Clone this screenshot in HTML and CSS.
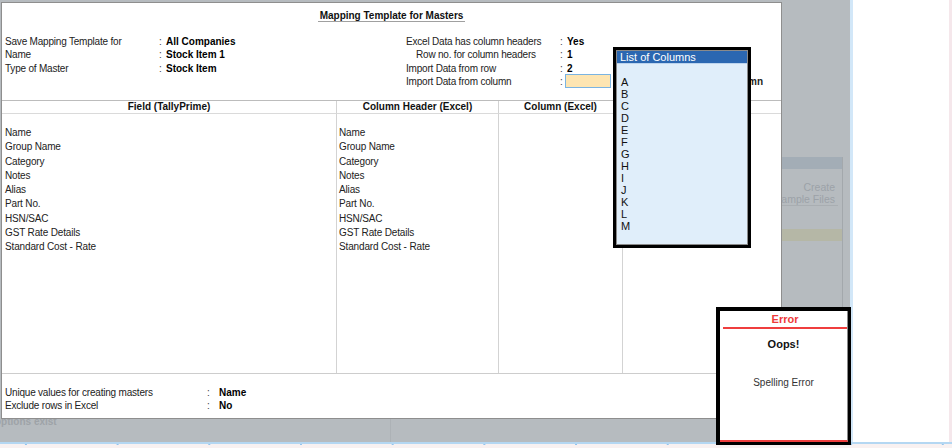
FILE: index.html
```html
<!DOCTYPE html>
<html lang="en">
<head>
<meta charset="utf-8">
<title>Mapping Template for Masters</title>
<link rel="stylesheet" href="styles.css">
</head>
<body>
<div class="screen">
  <div class="main-row">
    <div class="workspace">
      <div class="bg-window">
        <div class="bg-head"></div>
        <div class="bg-body">
          <div class="bg-link">Create<br>Sample Files</div>
          <div class="bg-band"></div>
        </div>
      </div>

      <div class="dialog">
        <div class="title-row"><span class="title">Mapping Template for Masters</span></div>

        <div class="fields">
          <div class="group group-left">
            <div class="frow"><span class="lbl">Save Mapping Template for</span><span class="colon">:</span><span class="val">All Companies</span></div>
            <div class="frow"><span class="lbl">Name</span><span class="colon">:</span><span class="val">Stock Item 1</span></div>
            <div class="frow"><span class="lbl">Type of Master</span><span class="colon">:</span><span class="val">Stock Item</span></div>
          </div>
          <div class="group group-right">
            <div class="frow"><span class="lbl">Excel Data has column headers</span><span class="colon">:</span><span class="val">Yes</span></div>
            <div class="frow"><span class="lbl indent">Row no. for column headers</span><span class="colon">:</span><span class="val">1</span></div>
            <div class="frow"><span class="lbl">Import Data from row</span><span class="colon">:</span><span class="val">2</span></div>
            <div class="frow"><span class="lbl">Import Data from column</span><span class="colon">:</span><span class="input"></span></div>
          </div>
          <div class="side-note">Column</div>
        </div>

        <div class="table">
          <div class="th">Field (TallyPrime)</div>
          <div class="th">Column Header (Excel)</div>
          <div class="th">Column (Excel)</div>
          <div class="th"></div>
          <div class="td td-first">
            <div>Name</div>
            <div>Group Name</div>
            <div>Category</div>
            <div>Notes</div>
            <div>Alias</div>
            <div>Part No.</div>
            <div>HSN/SAC</div>
            <div>GST Rate Details</div>
            <div>Standard Cost - Rate</div>
          </div>
          <div class="td td-second">
            <div>Name</div>
            <div>Group Name</div>
            <div>Category</div>
            <div>Notes</div>
            <div>Alias</div>
            <div>Part No.</div>
            <div>HSN/SAC</div>
            <div>GST Rate Details</div>
            <div>Standard Cost - Rate</div>
          </div>
          <div class="td"></div>
          <div class="td"></div>
        </div>

        <div class="footer">
          <div class="frow"><span class="lbl">Unique values for creating masters</span><span class="colon">:</span><span class="val">Name</span></div>
          <div class="frow"><span class="lbl">Exclude rows in Excel</span><span class="colon">:</span><span class="val">No</span></div>
        </div>
      </div>

      <div class="status">
        <span class="status-text">options exist</span>
        <span class="status-sep"></span>
      </div>
    </div>
    <div class="sidepane"></div>
  </div>
  <div class="taskbar"></div>

  <div class="list-popup">
    <div class="list-inner">
      <div class="list-head">List of Columns</div>
      <div class="list-items">
        <div>A</div><div>B</div><div>C</div><div>D</div><div>E</div><div>F</div><div>G</div>
        <div>H</div><div>I</div><div>J</div><div>K</div><div>L</div><div>M</div>
      </div>
    </div>
  </div>

  <div class="error-popup">
    <div class="error-inner">
      <div class="error-title">Error</div>
      <div class="error-head">Oops!</div>
      <div class="error-msg">Spelling Error</div>
    </div>
  </div>
</div>
</body>
</html>
```

FILE: styles.css
```css
* { box-sizing: border-box; margin: 0; padding: 0; }

html, body { width: 952px; height: 448px; overflow: hidden; }

body {
  font-family: "Liberation Sans", Arial, sans-serif;
  font-size: 10px;
  color: #1a1a1a;
  background: #fff;
}

.screen {
  position: relative;
  width: 952px;
  height: 448px;
  display: flex;
  flex-direction: column;
  overflow: hidden;
}

.main-row { display: flex; height: 442px; }

.workspace {
  position: relative;
  width: 850px;
  flex: none;
  background: #b6bbbf;
  display: flex;
  flex-direction: column;
}

.sidepane {
  flex: 1;
  background: #fff;
  border-left: 3px solid #d2e7f8;
  border-right: 3px solid #f5e7eb;
}

.taskbar {
  height: 6px;
  border-top: 2px solid #b4d7f2;
  background-color: #f8f1f1;
  background-image: linear-gradient(to right, transparent 25px, #94c4ec 25px, #94c4ec 27px, transparent 27px);
  background-size: 91.7px 1px;
  background-repeat: repeat-x;
}

/* faded window behind the dialog */
.bg-window {
  position: absolute;
  left: 700px;
  top: 157px;
  width: 143px;
  height: 262px;
  border-right: 1px solid #a3a8ac;
  z-index: 1;
}
.bg-head { height: 12px; background: #a3adb6; }
.bg-body { padding-top: 12px; }
.bg-link {
  text-align: right;
  padding-right: 3px;
  margin-right: 4px;
  font-size: 10.5px;
  line-height: 12px;
  color: #9ca2a8;
  border-bottom: 1px solid #a9aeb2;
}
.bg-band { margin-top: 23px; height: 12px; background: #b5b7a6; }

/* main dialog */
.dialog {
  position: relative;
  z-index: 2;
  margin: 2px 0 0 1px;
  width: 781px;
  height: 417px;
  flex: none;
  background: #fff;
  border: 1px solid #8e8e8e;
  display: flex;
  flex-direction: column;
}

.title-row { display: flex; justify-content: center; padding-top: 7px; }
.title {
  font-weight: bold;
  line-height: 11px;
  padding: 0 2px;
  color: #111;
  border-bottom: 1px solid #a0a0a0;
}

.fields {
  display: flex;
  margin-top: 13px;
  padding: 0 18px 0 3px;
}
.group-left { width: 401px; flex: none; }
.group-right { flex: 1; }

.frow {
  display: flex;
  align-items: center;
  height: 13.25px;
  line-height: 13.25px;
  white-space: nowrap;
}
.lbl { width: 154px; flex: none; letter-spacing: -0.2px; color: #222; }
.indent { padding-left: 10px; }
.colon { width: 5px; flex: none; color: #444; }
.val { padding-left: 2px; font-weight: bold; color: #000; }
.input {
  width: 46px;
  height: 14px;
  background: #fde5b2;
  border: 1px solid #7ab4e2;
}
.side-note {
  align-self: flex-end;
  font-weight: bold;
  line-height: 13.25px;
  color: #222;
}

.table {
  display: grid;
  grid-template-columns: 334px 162px 124px 1fr;
  grid-template-rows: 13px 259px;
  margin-top: 12px;
  border-top: 1px solid #bcbcbc;
  border-bottom: 1px solid #cdcdcd;
}
.th {
  font-weight: bold;
  text-align: center;
  line-height: 12px;
  color: #111;
  border-bottom: 1px solid #dadada;
}
.th + .th, .td + .td { border-left: 1px solid #d3d3d3; }
.td { padding-top: 12px; line-height: 14.25px; color: #222; letter-spacing: -0.15px; }
.td-first { padding-left: 3px; }
.td-second { padding-left: 2px; }

.footer { padding: 12px 0 0 3px; }
.footer .frow { height: 13.4px; line-height: 13.4px; }
.footer .lbl { width: 202px; }
.footer .val { padding-left: 7px; }

.status {
  display: grid;
  grid-template-columns: 390px 1fr;
  margin-top: -4px;
  flex: 1;
}
.status-text {
  font-weight: bold;
  color: #9ea3a8;
  line-height: 14px;
  margin-left: -5px;
  white-space: nowrap;
}
.status-sep { border-left: 1px solid #adb2b6; }

/* List of Columns popup */
.list-popup {
  position: absolute;
  left: 613px;
  top: 47px;
  width: 138px;
  height: 201px;
  border: 3px solid #000;
  z-index: 5;
}
.list-inner { height: 100%; border: 1px solid #8a8a8a; background: #e0eefa; }
.list-head {
  background: #2b67b1;
  color: #fff;
  font-size: 11px;
  line-height: 12px;
  padding-left: 3px;
  border-bottom: 1px solid #bcd4ee;
}
.list-items {
  padding: 12px 0 0 4px;
  font-size: 11px;
  line-height: 12px;
  color: #111;
}

/* Error popup */
.error-popup {
  position: absolute;
  left: 716px;
  top: 307px;
  width: 135px;
  height: 138px;
  border-style: solid;
  border-color: #000;
  border-width: 4px 3px 3px 4px;
  z-index: 5;
}
.error-inner {
  height: 100%;
  background: #fff;
  border-right: 1px solid #8a8a8a;
  border-bottom: 2px solid #ef3e3e;
  display: flex;
  flex-direction: column;
  text-align: center;
}
.error-title {
  margin-left: 3px;
  padding: 1px 0;
  line-height: 14px;
  font-size: 11px;
  font-weight: bold;
  color: #ee3a3a;
  border-bottom: 2px solid #ef3e3e;
}
.error-head {
  margin-top: 8px;
  font-size: 11px;
  font-weight: bold;
  line-height: 14px;
  color: #111;
}
.error-msg {
  margin-top: 25px;
  font-size: 10px;
  line-height: 14px;
  color: #333;
}
```
